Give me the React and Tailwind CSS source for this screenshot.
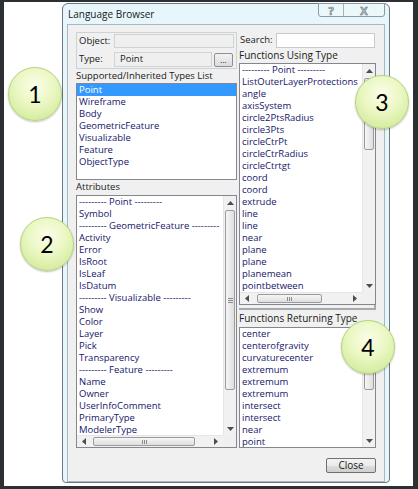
import { useState } from "react";

const TYPES = ["Point", "Wireframe", "Body", "GeometricFeature", "Visualizable", "Feature", "ObjectType"];

const ATTRIBUTES = [
  "--------- Point ---------",
  "Symbol",
  "--------- GeometricFeature ---------",
  "Activity",
  "Error",
  "IsRoot",
  "IsLeaf",
  "IsDatum",
  "--------- Visualizable ---------",
  "Show",
  "Color",
  "Layer",
  "Pick",
  "Transparency",
  "--------- Feature ---------",
  "Name",
  "Owner",
  "UserInfoComment",
  "PrimaryType",
  "ModelerType",
];

const USING = [
  "--------- Point ---------",
  "ListOuterLayerProtections",
  "angle",
  "axisSystem",
  "circle2PtsRadius",
  "circle3Pts",
  "circleCtrPt",
  "circleCtrRadius",
  "circleCtrtgt",
  "coord",
  "coord",
  "extrude",
  "line",
  "line",
  "near",
  "plane",
  "plane",
  "planemean",
  "pointbetween",
];

const RETURNING = [
  "center",
  "centerofgravity",
  "curvaturecenter",
  "extremum",
  "extremum",
  "extremum",
  "intersect",
  "intersect",
  "near",
  "point",
];

function Arrow({ dir }) {
  const points = {
    up: "0,4 3.5,0 7,4",
    down: "0,0 3.5,4 7,0",
    left: "4,0 0,3.5 4,7",
    right: "0,0 4,3.5 0,7",
  }[dir];
  const vertical = dir === "up" || dir === "down";
  return (
    <svg width={vertical ? 7 : 4} height={vertical ? 4 : 7} viewBox={vertical ? "0 0 7 4" : "0 0 4 7"}>
      <polygon points={points} fill="#4d4d4d" />
    </svg>
  );
}

function VScroll({ gapClass, thumbClass }) {
  return (
    <div className="flex w-[13px] flex-col border-l border-[#e6e6e6] bg-[#f1f1f1]">
      <div className="flex h-[13px] items-center justify-center">
        <Arrow dir="up" />
      </div>
      <div className={gapClass} />
      <div
        className={`mx-[1px] flex items-center justify-center rounded-[2px] border border-[#9b9b9b] bg-[linear-gradient(to_right,#f6f6f6,#dedede)] ${thumbClass}`}
      >
        <div className="flex flex-col gap-[1px]">
          <div className="h-px w-[5px] bg-[#8a8a8a]" />
          <div className="h-px w-[5px] bg-[#8a8a8a]" />
          <div className="h-px w-[5px] bg-[#8a8a8a]" />
        </div>
      </div>
      <div className="flex-1" />
      <div className="flex h-[13px] items-center justify-center">
        <Arrow dir="down" />
      </div>
    </div>
  );
}

function HScroll({ gapClass, thumbClass }) {
  return (
    <div className="flex h-[12px] flex-1 border-t border-[#e6e6e6] bg-[#f1f1f1]">
      <div className="flex w-[14px] items-center justify-center">
        <Arrow dir="left" />
      </div>
      <div className={gapClass} />
      <div
        className={`my-[1px] flex items-center justify-center gap-[1px] rounded-[2px] border border-[#9b9b9b] bg-[linear-gradient(to_bottom,#f6f6f6,#dedede)] ${thumbClass}`}
      >
        <div className="h-[4px] w-px bg-[#8a8a8a]" />
        <div className="h-[4px] w-px bg-[#8a8a8a]" />
        <div className="h-[4px] w-px bg-[#8a8a8a]" />
      </div>
      <div className="flex-1" />
      <div className="flex w-[14px] items-center justify-center">
        <Arrow dir="right" />
      </div>
    </div>
  );
}

function Rows({ items, selected, onSelect }) {
  return (
    <div className="min-w-0 flex-1 overflow-hidden">
      {items.map((item, index) => (
        <div
          key={index}
          onClick={() => onSelect?.(index)}
          className={`h-[12px] whitespace-nowrap px-[2px] leading-[12px] ${
            selected === index ? "bg-[#3399ff] text-white" : "text-[#15156a]"
          }`}
        >
          {item}
        </div>
      ))}
    </div>
  );
}

function Circle({ label, className }) {
  return (
    <div
      className={`absolute flex h-[54px] w-[54px] items-center justify-center rounded-full border border-[#b3d57e] bg-[radial-gradient(circle_at_50%_35%,#fbfde9_0%,#eaf7c2_45%,#c9e58c_100%)] font-['Lato',sans-serif] text-[23px] text-black shadow-[0_1px_2px_rgba(0,0,0,0.25)] ${className}`}
    >
      {label}
    </div>
  );
}

export default function App() {
  const [selectedType, setSelectedType] = useState(0);

  return (
    <div className="h-[489px] w-[418px] bg-[#2c3035] pb-[3px] pl-[4px] pr-[5px] pt-[2px] font-['Open_Sans',sans-serif] text-[9.5px]">
      <div className="relative h-full bg-white pb-[3px] pl-[58px] pr-[23px] pt-[1px]">
        <div className="flex h-[480px] w-[328px] flex-col rounded-b-[4px] rounded-t-[6px] border border-[#6b7880] bg-[#e6f6fa]">
          <div className="flex h-[20px] items-start justify-between pl-[5px] pr-[4px]">
            <span className="pt-[3px] text-[10px] text-[#1a1a1a]">Language Browser</span>
            <div className="-mt-px flex h-[14px] rounded-b-[3px] border border-[#8d9aa1] bg-[#eaf7fb]">
              <div className="flex w-[25px] items-center justify-center border-r border-[#a8b4ba] text-[11px] font-bold leading-none text-[#c4ccd0] [-webkit-text-stroke:0.6px_#6b767c]">
                ?
              </div>
              <div className="flex w-[40px] items-center justify-center text-[11px] font-bold leading-none text-[#c4ccd0] [-webkit-text-stroke:0.6px_#6b767c]">
                X
              </div>
            </div>
          </div>

          <div className="mx-[4px] flex flex-1 gap-[2px] border border-[#a9b7bf] bg-[#f0f0f0] px-[8px] pt-[7px]">
            {/* left column */}
            <div className="flex w-[161px] flex-col">
              <div className="flex h-[37px] flex-col gap-[4px] border border-[#cad3d8] px-[2px] pt-px">
                <div className="flex h-[14px] items-center">
                  <span className="w-[35px] text-[#1a1a1a]">Object:</span>
                  <div className="h-[14px] w-[120px] border border-[#d2d2d2] bg-[#efefef]" />
                </div>
                <div className="flex h-[15px] items-center">
                  <span className="w-[35px] text-[#1a1a1a]">Type:</span>
                  <div className="flex h-[15px] w-[98px] items-center border border-[#d2d2d2] bg-[#efefef] pl-[5px] text-[#1a1a1a]">
                    Point
                  </div>
                  <button className="ml-[2px] flex h-[14px] w-[19px] items-end justify-center rounded-[2px] border border-[#8e8f8f] bg-[linear-gradient(to_bottom,#f2f2f2,#dcdcdc)] pb-[2px] text-[8px] leading-none">
                    ...
                  </button>
                </div>
              </div>
              <div className="flex h-[14px] items-center text-[#1a1a1a]">Supported/Inherited Types List</div>
              <div className="flex h-[97px] border border-[#828790] bg-white">
                <Rows items={TYPES} selected={selectedType} onSelect={setSelectedType} />
              </div>
              <div className="flex h-[15px] items-center text-[#1a1a1a]">Attributes</div>
              <div className="flex h-[253px] flex-col border border-[#828790] bg-white">
                <div className="flex min-h-0 flex-1">
                  <Rows items={ATTRIBUTES} />
                  <VScroll gapClass="h-[1px]" thumbClass="h-[180px]" />
                </div>
                <div className="flex">
                  <HScroll gapClass="w-[2px]" thumbClass="w-[102px]" />
                  <div className="h-[12px] w-[13px] bg-[#f0f0f0]" />
                </div>
              </div>
            </div>

            {/* right column */}
            <div className="flex w-[137px] flex-col">
              <div className="mt-px flex h-[15px] items-center">
                <span className="w-[37px] pl-px text-[#1a1a1a]">Search:</span>
                <input className="h-[15px] w-[99px] border border-[#c9c9c9] bg-white outline-none" />
              </div>
              <div className="flex h-[15px] items-center text-[10px] text-[#1a1a1a]">Functions Using Type</div>
              <div className="flex h-[242px] flex-col border border-[#828790] bg-white">
                <div className="flex min-h-0 flex-1">
                  <Rows items={USING} />
                  <VScroll gapClass="h-[1px]" thumbClass="h-[72px]" />
                </div>
                <div className="flex">
                  <HScroll gapClass="w-[3px]" thumbClass="w-[65px]" />
                  <div className="h-[12px] w-[13px] bg-[#f0f0f0]" />
                </div>
              </div>
              <div className="h-[5px] border-b-2 border-r-2 border-[#a9a9a9]" />
              <div className="flex h-[17px] items-center text-[10px] text-[#1a1a1a]">Functions Returning Type</div>
              <div className="flex h-[121px] border border-[#828790] bg-white">
                <Rows items={RETURNING} />
                <VScroll gapClass="h-[1px]" thumbClass="h-[48px]" />
              </div>
              <button className="mt-[10px] flex h-[15px] w-[50px] items-center justify-center self-end rounded-[2px] border border-[#707070] bg-[linear-gradient(to_bottom,#f2f2f2_0%,#ebebeb_50%,#dddddd_51%,#cfcfcf_100%)] text-[10px] text-[#1a1a1a]">
                Close
              </button>
            </div>
          </div>
        </div>

        <Circle label="1" className="left-[4px] top-[65px]" />
        <Circle label="2" className="left-[16px] top-[215px]" />
        <Circle label="3" className="left-[351px] top-[73px]" />
        <Circle label="4" className="left-[337px] top-[318px]" />
      </div>
    </div>
  );
}
